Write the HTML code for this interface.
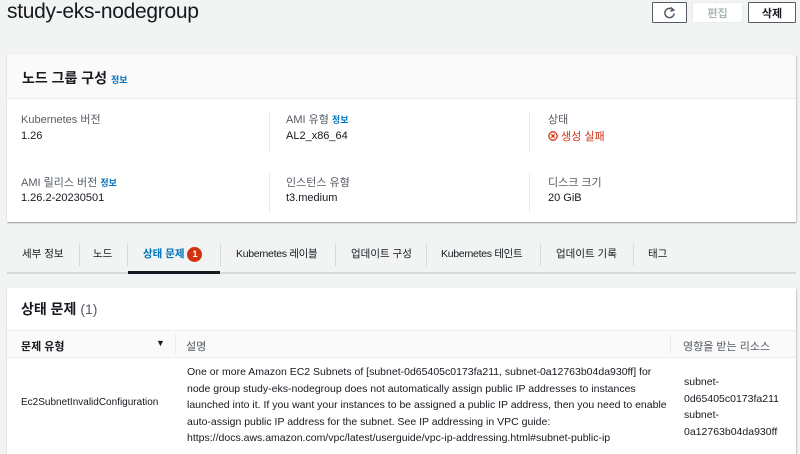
<!DOCTYPE html>
<html><head><meta charset="utf-8"><style>
*{box-sizing:border-box;margin:0;padding:0}
body{width:800px;height:454px;overflow:hidden;background:#f2f3f3;font-family:"Liberation Sans","Noto Sans CJK KR",sans-serif;color:#16191f;position:relative;font-size:11px}
.abs{position:absolute}
.title{left:7px;top:0;font-size:21px;letter-spacing:-0.3px}
.btn{position:absolute;top:2px;height:21px;border:1px solid #545b64;background:#fff;font-size:11px;font-weight:bold;display:flex;align-items:center;justify-content:center;border-radius:1px}
.card{position:absolute;left:7px;right:4px;background:#fff;box-shadow:0 1px 1px rgba(0,28,36,.3),1px 1px 1px rgba(0,28,36,.15)}
.hd{background:#fafafa;border-bottom:1px solid #eaeded}
.info{color:#0073bb;font-size:9px;font-weight:bold}
.lbl{color:#545b64;font-size:11px}
.val{font-size:11px}
.vline{position:absolute;width:1px;background:#eaeded}
.tab{position:absolute;top:246px;font-size:10.5px;color:#16191f;white-space:nowrap}
.tsep{position:absolute;top:244px;width:1px;height:22px;background:#d5dbdb}
</style></head><body>
<div class="abs title">study-eks-nodegroup</div>
<div class="btn" style="left:652px;width:35px"><svg width="13" height="13" viewBox="0 0 14 14"><path d="M11 4.5A5 5 0 1 0 12 8" fill="none" stroke="#545b64" stroke-width="1.6"/><path d="M8.5 1.5l3 3-3.5 1" fill="none" stroke="#545b64" stroke-width="1.6"/></svg></div>
<div class="btn" style="left:692px;width:51px;border-color:#eaeded;color:#aab7b8">편집</div>
<div class="btn" style="left:748px;width:48px">삭제</div>

<div class="card" style="top:55px;height:167px">
 <div class="hd" style="height:44px;padding:13px 0 0 15px;font-size:14px;font-weight:bold">노드 그룹 구성 <span class="info">정보</span></div>
 <div class="vline" style="left:262px;top:57px;height:40px"></div>
 <div class="vline" style="left:522px;top:57px;height:40px"></div>
 <div class="vline" style="left:262px;top:118px;height:40px"></div>
 <div class="vline" style="left:522px;top:118px;height:40px"></div>
 <div class="abs lbl" style="left:14px;top:56px">Kubernetes 버전</div>
 <div class="abs val" style="left:14px;top:75px">1.26</div>
 <div class="abs lbl" style="left:279px;top:56px">AMI 유형 <span class="info">정보</span></div>
 <div class="abs val" style="left:279px;top:75px">AL2_x86_64</div>
 <div class="abs lbl" style="left:541px;top:56px">상태</div>
 <div class="abs val" style="left:541px;top:73px;color:#d13212"><svg width="10" height="10" viewBox="0 0 10 10" style="vertical-align:-1px"><circle cx="5" cy="5" r="4.2" fill="none" stroke="#d13212" stroke-width="1.3"/><path d="M3.3 3.3l3.4 3.4M6.7 3.3l-3.4 3.4" stroke="#d13212" stroke-width="1.3"/></svg> 생성 실패</div>
 <div class="abs lbl" style="left:14px;top:119px">AMI 릴리스 버전 <span class="info">정보</span></div>
 <div class="abs val" style="left:14px;top:137px">1.26.2-20230501</div>
 <div class="abs lbl" style="left:279px;top:119px">인스턴스 유형</div>
 <div class="abs val" style="left:279px;top:137px">t3.medium</div>
 <div class="abs lbl" style="left:541px;top:119px">디스크 크기</div>
 <div class="abs val" style="left:541px;top:137px">20 GiB</div>
</div>

<div class="abs" style="left:7px;right:4px;top:272px;height:2px;background:#d5dbdb"></div>
<div class="abs" style="left:128px;width:92px;top:271px;height:3px;background:#16191f"></div>
<div class="tab" style="left:22px">세부 정보</div>
<div class="tsep" style="left:79px"></div>
<div class="tab" style="left:93px">노드</div>
<div class="tsep" style="left:127px"></div>
<div class="tab" style="left:143px;color:#0073bb;font-weight:bold">상태 문제 <span style="display:inline-block;width:15px;height:15px;border-radius:50%;background:#d13212;color:#fff;text-align:center;font-size:9px;line-height:15px;vertical-align:0">1</span></div>
<div class="tsep" style="left:220px"></div>
<div class="tab" style="left:236px;letter-spacing:-0.3px">Kubernetes 레이블</div>
<div class="tsep" style="left:335px"></div>
<div class="tab" style="left:351px">업데이트 구성</div>
<div class="tsep" style="left:426px"></div>
<div class="tab" style="left:441px;letter-spacing:-0.3px">Kubernetes 테인트</div>
<div class="tsep" style="left:540px"></div>
<div class="tab" style="left:556px">업데이트 기록</div>
<div class="tsep" style="left:633px"></div>
<div class="tab" style="left:648px">태그</div>

<div class="card" style="top:288px;height:166px">
 <div class="hd" style="height:42px;padding:11px 0 0 14px;font-size:14px;font-weight:bold;border:none;background:#fff">상태 문제 <span style="font-weight:normal;color:#545b64">(1)</span></div>
 <div style="position:absolute;top:42px;left:0;right:0;height:28px;background:#fafafa;border-top:1px solid #eaeded;border-bottom:1px solid #eaeded"></div>
 <div class="abs" style="left:14px;top:50px;font-weight:bold">문제 유형</div>
 <div class="abs" style="left:149px;top:50px;font-size:9px">▼</div>
 <div class="vline" style="left:168px;top:46px;height:20px"></div>
 <div class="abs" style="left:179px;top:50px;color:#545b64">설명</div>
 <div class="vline" style="left:663px;top:46px;height:20px"></div>
 <div class="abs" style="left:676px;top:50px;color:#545b64">영향을 받는 리소스</div>
 <div class="abs" style="left:14px;top:109px;font-size:10px">Ec2SubnetInvalidConfiguration</div>
 <div class="abs" style="left:180px;top:76px;width:480px;line-height:16.5px;font-size:10.5px">One or more Amazon EC2 Subnets of [subnet-0d65405c0173fa211, subnet-0a12763b04da930ff] for node group study-eks-nodegroup does not automatically assign public IP addresses to instances launched into it. If you want your instances to be assigned a public IP address, then you need to enable auto-assign public IP address for the subnet. See IP addressing in VPC guide: https://docs.aws.amazon.com/vpc/latest/userguide/vpc-ip-addressing.html#subnet-public-ip</div>
 <div class="abs" style="left:677px;top:86px;line-height:16.5px;font-size:10.5px">subnet-<br>0d65405c0173fa211<br>subnet-<br>0a12763b04da930ff</div>
</div>
</body></html>
